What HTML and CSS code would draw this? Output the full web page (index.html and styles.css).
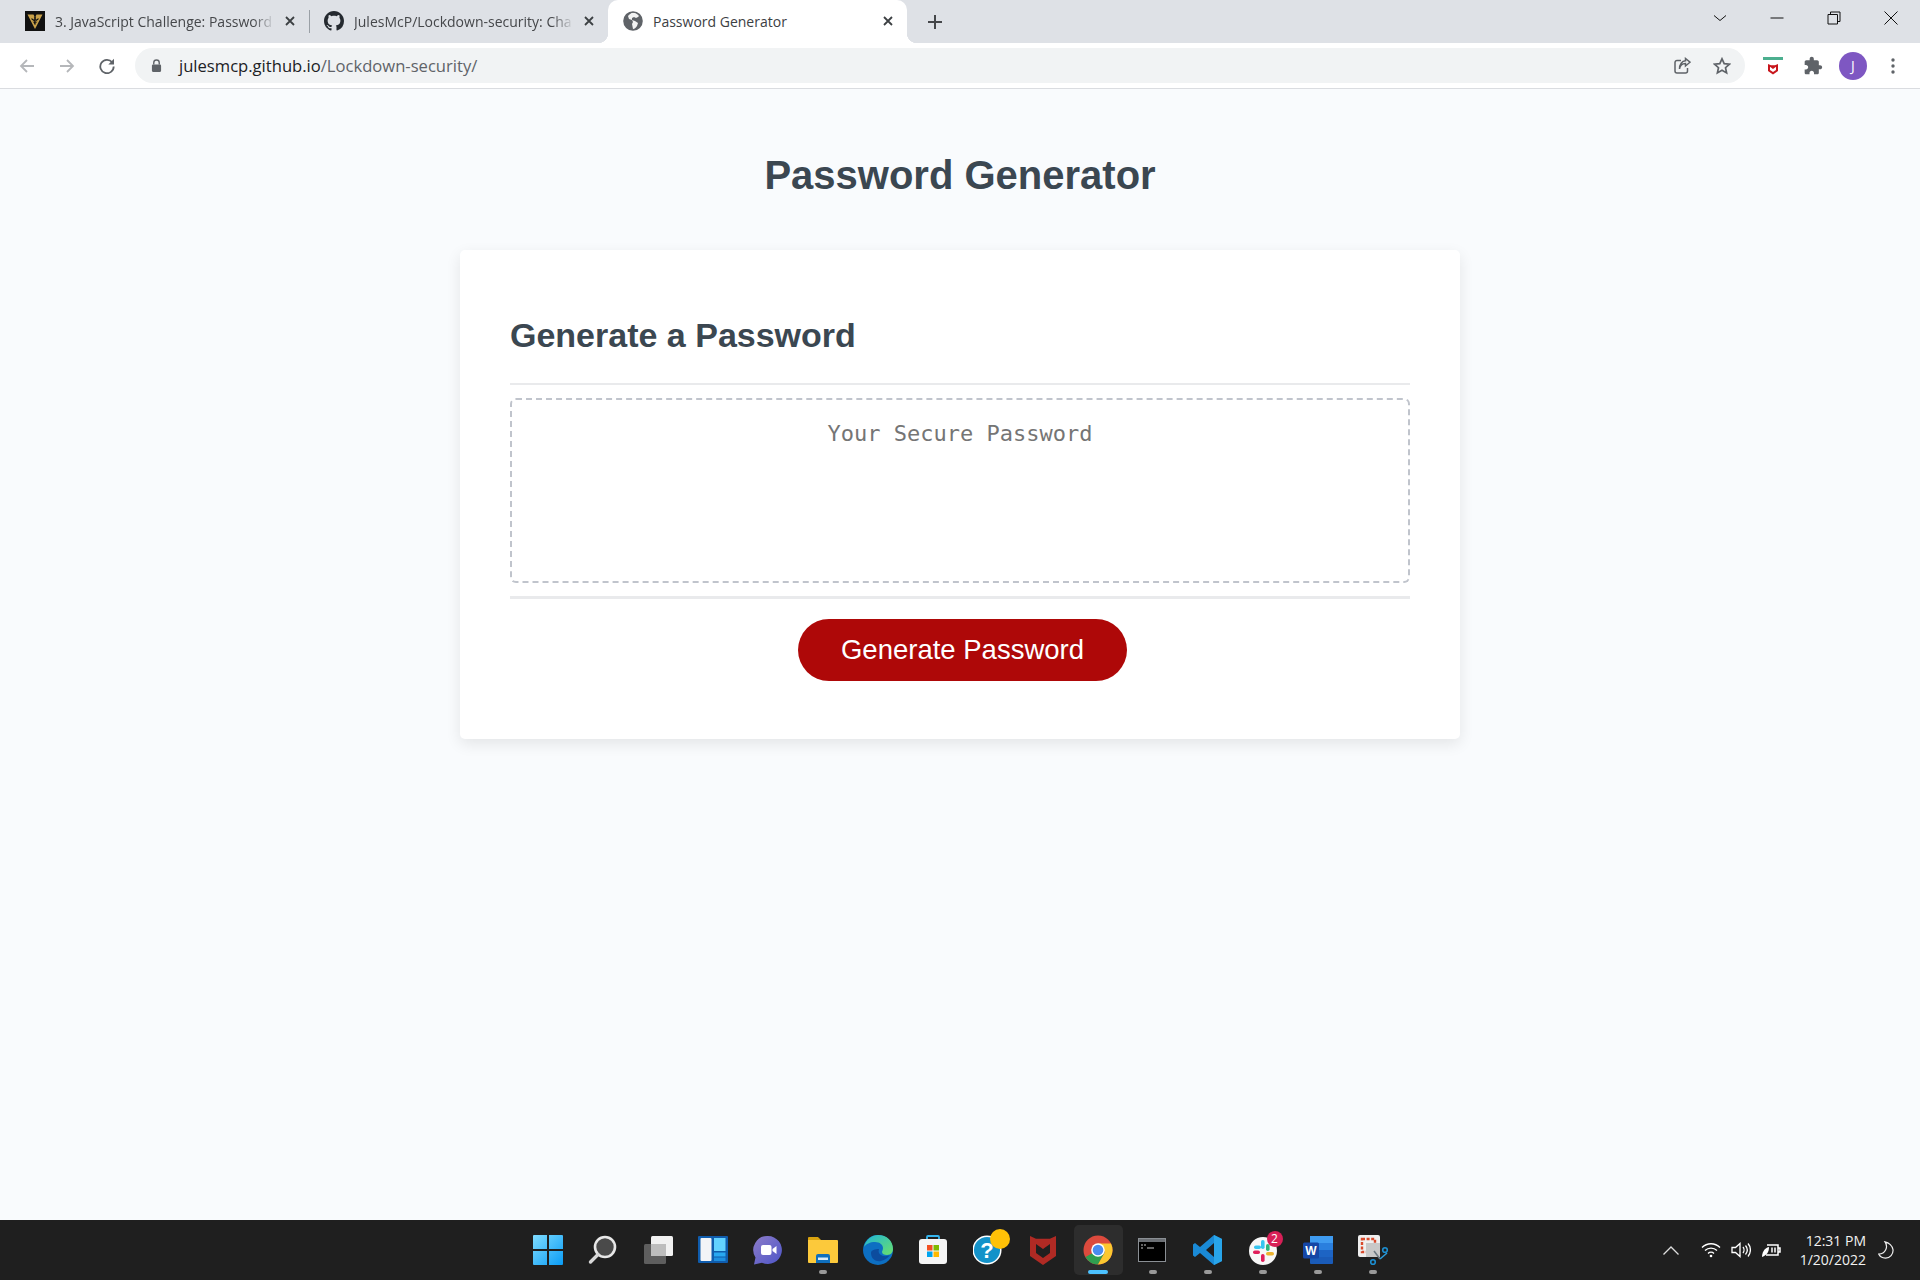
FILE: index.html
```html
<!DOCTYPE html>
<html lang="en">
<head>
<meta charset="utf-8">
<title>Password Generator</title>
<link rel="stylesheet" href="styles.css">
</head>
<body>
<div class="screen">
  <header class="browser">
    <div class="tabstrip">
      <div class="tabs">
        <div class="tab">
          <svg class="favicon" viewBox="0 0 20 20"><rect width="20" height="20" fill="#111"/><path d="M2.500 3.500h6l1.500 3 1.500-3h6L10 18z" fill="#c9a24a"/><path d="M9.200 5.500h1.600v8H9.200zM6.500 7l3 2v1.500L6.500 8.500zM13.500 7l-3 2v1.500l3-2zM7.500 10l2 1.500V13zM12.500 10l-2 1.500V13z" fill="#111"/></svg>
          <span class="tab-title">3. JavaScript Challenge: Password</span>
          <svg class="tab-close" viewBox="0 0 10 10"><path d="M1 1l8 8M9 1l-8 8"/></svg>
        </div>
        <div class="tab tab-second">
          <svg class="favicon" viewBox="0 0 16 16"><path fill="#24292f" d="M8 0C3.580 0 0 3.580 0 8c0 3.540 2.290 6.530 5.470 7.590.4.070.55-.17.55-.38 0-.19-.01-.82-.01-1.490-2.010.37-2.530-.49-2.690-.94-.09-.23-.48-.94-.82-1.130-.28-.15-.68-.52-.01-.53.63-.01 1.080.58 1.230.82.720 1.210 1.870.87 2.330.66.070-.52.280-.87.510-1.070-1.780-.2-3.640-.89-3.640-3.950 0-.87.310-1.590.820-2.150-.08-.2-.36-1.020.08-2.120 0 0 .67-.21 2.200.82.640-.18 1.320-.27 2-.27s1.360.09 2 .27c1.530-1.040 2.200-.82 2.200-.82.440 1.100.16 1.920.08 2.120.51.560.82 1.270.82 2.150 0 3.070-1.870 3.750-3.650 3.950.29.25.54.73.54 1.480 0 1.070-.01 1.930-.01 2.200 0 .21.150.46.550.38A8.013 8.013 0 0 0 16 8c0-4.420-3.580-8-8-8z"/></svg>
          <span class="tab-title">JulesMcP/Lockdown-security: Cha</span>
          <svg class="tab-close" viewBox="0 0 10 10"><path d="M1 1l8 8M9 1l-8 8"/></svg>
        </div>
        <div class="tab tab-active">
          <svg class="favicon" viewBox="0 0 20 20"><circle cx="10" cy="10" r="9" fill="#5f6368"/><path d="M10 1.500c-2 .5-4 2-5 3.500l1 3 3 1 1 2-1 2 1 5c2 0 3-2 4-3l1-3-3-2-3-1V7l2-1 2 1 2-1 1-1c-1.500-2-3.500-3.500-6-3.500z" fill="#fff" opacity=".92"/><circle cx="10" cy="10" r="9" fill="none" stroke="#5f6368" stroke-width="1.600"/></svg>
          <span class="tab-title">Password Generator</span>
          <svg class="tab-close" viewBox="0 0 10 10"><path d="M1 1l8 8M9 1l-8 8"/></svg>
        </div>
        <svg class="new-tab" viewBox="0 0 14 14"><path d="M7 0v14M0 7h14"/></svg>
      </div>
      <div class="window-controls">
        <svg class="win-btn" viewBox="0 0 14 14"><path d="M1 4.500l6 5 6-5"/></svg>
        <svg class="win-btn" viewBox="0 0 14 14"><path d="M0.500 7h13"/></svg>
        <svg class="win-btn" viewBox="0 0 14 14"><path d="M1 3.500h9.500V13H1zM3.500 3.500V1H13v9.500h-2.500"/></svg>
        <svg class="win-btn" viewBox="0 0 14 14"><path d="M.5.500l13 13M13.500.500l-13 13"/></svg>
      </div>
    </div>
    <div class="toolbar">
      <div class="nav-buttons">
        <svg class="nav-icon nav-off" viewBox="0 0 16 16"><path d="M15 8H2M8 2L2 8l6 6"/></svg>
        <svg class="nav-icon nav-off" viewBox="0 0 16 16"><path d="M1 8h13M8 2l6 6-6 6"/></svg>
        <svg class="nav-icon" viewBox="0 0 16 16"><path d="M13.200 4.300A6.700 6.700 0 1 0 14.700 8.500"/><path class="nav-head" d="M15 .8v5.700H9.300z"/></svg>
      </div>
      <div class="omnibox">
        <svg class="lock" viewBox="0 0 12 14"><path d="M3 6V4a3 3 0 0 1 6 0v2" fill="none" stroke="#5f6368" stroke-width="1.500"/><rect x="1" y="6" width="10" height="8" rx="1.200" fill="#5f6368"/></svg>
        <span class="url"><span class="url-host">julesmcp.github.io</span>/Lockdown-security/</span>
        <svg class="omni-icon" viewBox="0 0 18 18"><path d="M8 3.500H4a2 2 0 0 0-2 2V14a2 2 0 0 0 2 2h8.500a2 2 0 0 0 2-2v-3"/><path d="M6.500 12c.5-3.500 3-5.500 6-5.500V9L17 5.200 12.500 1.500v2.300C9 4 6.500 7.500 6.500 12z"/></svg>
        <svg class="omni-icon" viewBox="0 0 18 18"><path d="M9 1.800l2.200 4.800 5.200.6-3.900 3.500 1.100 5.200L9 13.300l-4.600 2.600 1.100-5.200L1.600 7.200l5.200-.6z" stroke-width="1.700"/></svg>
      </div>
      <div class="extensions">
        <div class="ext">
          <span class="ext-bar"></span>
          <svg class="ext-shield" viewBox="0 0 12 12"><path d="M1 1l3 1.200h4L11 1v7l-5 3.500L1 8z" fill="#c8161d"/><path d="M3 3.800L6 6l3-2.200V7L6 9 3 7z" fill="#fff"/></svg>
        </div>
        <div class="ext">
          <svg class="puzzle" viewBox="0 0 24 24"><path fill="#5f6368" d="M20.500 11H19V7c0-1.100-.9-2-2-2h-4V3.500C13 2.120 11.880 1 10.500 1S8 2.120 8 3.500V5H4c-1.100 0-1.990.9-1.990 2v3.800H3.500c1.490 0 2.700 1.210 2.700 2.700s-1.210 2.700-2.700 2.700H2V20c0 1.100.9 2 2 2h3.800v-1.500c0-1.490 1.210-2.700 2.700-2.700s2.700 1.210 2.700 2.700V22H17c1.100 0 2-.9 2-2v-4h1.500c1.380 0 2.500-1.120 2.500-2.500S21.880 11 20.500 11z"/></svg>
        </div>
        <div class="ext"><span class="avatar">J</span></div>
        <div class="ext">
          <svg class="dots" viewBox="0 0 4 16"><circle cx="2" cy="2" r="1.700"/><circle cx="2" cy="8" r="1.700"/><circle cx="2" cy="14" r="1.700"/></svg>
        </div>
      </div>
    </div>
  </header>

  <main class="page">
    <h1 class="page-title">Password Generator</h1>
    <section class="card">
      <h2 class="card-title">Generate a Password</h2>
      <div class="card-body">
        <div class="password-box">Your Secure Password</div>
      </div>
      <div class="card-footer">
        <button class="generate" type="button">Generate Password</button>
      </div>
    </section>
  </main>

  <footer class="taskbar">
    <div></div>
    <div class="taskbar-apps">
      <div class="app">
        <svg class="app-icon" viewBox="0 0 30 30"><defs><linearGradient id="win" x1="0" y1="0" x2="1" y2="1"><stop offset="0" stop-color="#7fdcff"/><stop offset="1" stop-color="#0a9cf5"/></linearGradient></defs><path fill="url(#win)" d="M0 1a1 1 0 0 1 1-1h13v14H0zM16 0h13a1 1 0 0 1 1 1v13H16zM0 16h14v14H1a1 1 0 0 1-1-1zM16 16h14v13a1 1 0 0 1-1 1H16z"/></svg>
      </div>
      <div class="app">
        <svg class="app-icon" viewBox="0 0 30 30"><circle cx="17" cy="12" r="10" fill="#4a4a4a" stroke="#e8e8e8" stroke-width="2.600"/><path d="M10 19.500L2.500 27" stroke="#d8d8d8" stroke-width="3.400" stroke-linecap="round"/></svg>
      </div>
      <div class="app">
        <svg class="app-icon" viewBox="0 0 30 30"><rect x="1" y="9" width="22" height="20" rx="1.500" fill="#5e5e5e"/><rect x="8" y="1" width="22" height="20" rx="1.500" fill="#f1f1f1"/><rect x="8" y="9" width="15" height="12" fill="#bdbdbd"/></svg>
      </div>
      <div class="app">
        <svg class="app-icon" viewBox="0 0 30 30"><rect y="1" width="30" height="27" rx="1" fill="#0f5cad"/><rect x="2.500" y="3" width="11" height="23" rx="1" fill="#f2f4f7"/><rect x="16" y="3" width="11.500" height="13" fill="#62d2ff"/><rect x="16" y="17.500" width="11.500" height="4" fill="#28a8f2"/><rect x="16" y="22.500" width="11.500" height="3.500" fill="#1d8fe0"/></svg>
      </div>
      <div class="app">
        <svg class="app-icon" viewBox="0 0 30 30"><defs><linearGradient id="teams" x1="0" y1="0" x2="1" y2="1"><stop offset="0" stop-color="#8d7cc9"/><stop offset="1" stop-color="#4d55c8"/></linearGradient></defs><path fill="url(#teams)" d="M15 1a14 14 0 1 1-6 26.700L1 29.500l1.500-7A14 14 0 0 1 15 1z"/><rect x="8" y="10" width="10.500" height="10" rx="2" fill="#fff"/><path d="M19.500 14l4-3v8l-4-3z" fill="#fff"/></svg>
      </div>
      <div class="app app-open">
        <svg class="app-icon" viewBox="0 0 30 30"><path d="M0 3a1 1 0 0 1 1-1h9l3 3h-13z" fill="#d9a30f"/><path d="M0 5h29a1 1 0 0 1 1 1v21a1 1 0 0 1-1 1H1a1 1 0 0 1-1-1z" fill="#fcc93b"/><path d="M8 21a2 2 0 0 1 2-2h10a2 2 0 0 1 2 2v7H8z" fill="#0f6fbd"/><rect x="10" y="22.500" width="10" height="2.500" fill="#d9ecfb"/></svg>
      </div>
      <div class="app">
        <svg class="app-icon" viewBox="0 0 30 30"><defs><linearGradient id="edge" x1="0" y1="0" x2="1" y2="1"><stop offset="0" stop-color="#1fb5d8"/><stop offset="1" stop-color="#6be06b"/></linearGradient></defs><circle cx="15" cy="15" r="15" fill="#0d6fc2"/><path d="M1 12C3 4 9 0 15 0c9 0 15 6 15 14 0 3-2 6-6 6-3 0-5-1-5-3 0-1 1-2 1-4 0-3-3-6-8-6-5 0-9 2-11 5z" fill="url(#edge)"/><path d="M8 18c0 6 5 9 10 8 4-1 7-3 9-6-2 1-6 2-9 0-2-1-3-3-2-6-4 0-8 1-8 4z" fill="#0c4c9e"/></svg>
      </div>
      <div class="app">
        <svg class="app-icon" viewBox="0 0 30 30"><path d="M9 4V2a1 1 0 0 1 1-1h10a1 1 0 0 1 1 1v2" fill="none" stroke="#35b6f0" stroke-width="1.800"/><rect x="1" y="4" width="28" height="25" rx="3" fill="#f5f5f5"/><rect x="9" y="10" width="5.500" height="5.500" fill="#f25022"/><rect x="15.500" y="10" width="5.500" height="5.500" fill="#7fba00"/><rect x="9" y="16.500" width="5.500" height="5.500" fill="#00a4ef"/><rect x="15.500" y="16.500" width="5.500" height="5.500" fill="#ffb900"/></svg>
      </div>
      <div class="app">
        <svg class="app-icon" viewBox="0 0 30 30"><circle cx="14" cy="15" r="13.800" fill="#1392c9" stroke="#fff" stroke-width="1.500"/><text class="help-mark" x="14" y="23" text-anchor="middle">?</text></svg>
        <span class="help-dot"></span>
      </div>
      <div class="app">
        <svg class="app-icon" viewBox="0 0 30 30"><path d="M2 1l6 2.800 7-.1 6.900.1L28 1v20l-13 9-13-9z" fill="#b02a24"/><path d="M8 9l7 5 7-5v9l-7 5-7-5z" fill="#1f1f1f"/></svg>
      </div>
      <div class="app app-active">
        <svg class="app-icon" viewBox="0 0 30 30"><circle cx="15" cy="15" r="14.500" fill="#dc4a3d"/><path d="M15 15L2.500 22A14.500 14.500 0 0 0 15 29.500L22 17z" fill="#2f9e4f"/><path d="M15 8.500h13A14.500 14.500 0 0 1 15 29.500L22 17z" fill="#fbc830"/><circle cx="15" cy="15" r="6.800" fill="#fff"/><circle cx="15" cy="15" r="5.300" fill="#4a8cf0"/></svg>
      </div>
      <div class="app app-open">
        <svg class="app-icon" viewBox="0 0 30 30"><rect x=".5" y="3.500" width="27" height="23" fill="#000" stroke="#8a8f94"/><rect x="1" y="4" width="26" height="3" fill="#6c7075"/><path d="M3 10h2M6 10h2M3 13h2M9 13h7" stroke="#c8c8c8"/></svg>
      </div>
      <div class="app app-open">
        <svg class="app-icon" viewBox="0 0 30 30"><path d="M21 0l8 4v22l-8 4-14-12-5 4-2-1.500V9.500L2 8l5 4L21 0zM21 8l-8 7 8 7z" fill="#1a8ad6"/><path d="M21 0l8 4v22l-8 4z" fill="#28a5ea"/></svg>
      </div>
      <div class="app app-open">
        <svg class="app-icon" viewBox="0 0 30 30"><circle cx="15" cy="16" r="14" fill="#f7f7f7"/><rect x="13" y="5" width="3.600" height="9" rx="1.800" fill="#36c5f0"/><rect x="6" y="10.500" width="7" height="3.600" rx="1.800" fill="#36c5f0"/><rect x="18" y="9" width="3.600" height="7" rx="1.800" fill="#2eb67d"/><rect x="18" y="17" width="8" height="3.600" rx="1.800" fill="#ecb22e"/><rect x="13" y="19" width="3.600" height="8" rx="1.800" fill="#e01e5a"/><rect x="5" y="15.500" width="7" height="3.600" rx="1.800" fill="#e01e5a"/></svg>
        <span class="slack-badge">2</span>
      </div>
      <div class="app app-open">
        <svg class="app-icon" viewBox="0 0 30 30"><rect x="7" y="1" width="23" height="28" rx="1" fill="#1a5bb8"/><rect x="7" y="1" width="23" height="7" fill="#3f9bf0"/><rect x="7" y="8" width="23" height="7" fill="#2a7fde"/><rect x="7" y="15" width="23" height="7" fill="#1d64c4"/><rect y="7.500" width="16" height="16" rx="1.500" fill="#1546a6"/><text class="word-mark" x="8" y="20" text-anchor="middle">W</text></svg>
      </div>
      <div class="app app-open">
        <svg class="app-icon app-icon-snip" viewBox="0 0 30 30"><rect width="22" height="22" rx="2" fill="#efefef"/><rect x="4" y="4" width="13" height="13" fill="none" stroke="#d94a2c" stroke-width="2.400" stroke-dasharray="3 1.600"/><rect x="8" y="8" width="14" height="14" fill="#c8c8c8"/><path d="M16 16l6 8" stroke="#6c7880" stroke-width="1.600"/><path d="M22 24L29 18" stroke="#2a9ad8" stroke-width="1.600"/><circle cx="15" cy="27" r="2.300" fill="none" stroke="#1d8ed0" stroke-width="1.600"/><circle cx="27" cy="15" r="2.300" fill="none" stroke="#1d8ed0" stroke-width="1.600"/></svg>
      </div>
    </div>
    <div class="tray">
      <svg class="tray-chevron" viewBox="0 0 16 9"><path d="M.5 8.500L8 1l7.500 7.500"/></svg>
      <div class="tray-icons">
        <svg class="tray-icon" viewBox="0 0 20 16"><path d="M1 5.500c5-5 13-5 18 0M4 8.500c3.300-3.300 8.700-3.300 12 0M7 11.500c1.700-1.700 4.300-1.700 6 0"/><circle cx="10" cy="14" r="1.300" fill="#fff" stroke="none"/></svg>
        <svg class="tray-icon" viewBox="0 0 20 16"><path d="M1 5.500h3.500L9 1.500v13l-4.500-4H1zM12 5c1.300 1.600 1.300 4.400 0 6M14.500 3.500c2.200 2.700 2.200 6.300 0 9M17 1.500c3.200 3.600 3.200 9.400 0 13"/></svg>
        <svg class="tray-icon" viewBox="0 0 20 16"><path d="M6 3h11v10H5M17 6h2v4h-2M11 5.500v5M14 5.500v5" stroke-width="1.500"/><path d="M1 15c0-4 2-9 7-10 0 5-2 8-7 10z" fill="#fff" stroke="none"/></svg>
      </div>
      <div class="clock"><span>12:31 PM</span><span>1/20/2022</span></div>
      <svg class="moon" viewBox="0 0 16 18"><path d="M7 .8c4 .8 7.500 4 8 7.800.5 4.500-3 8.500-7.500 8.500-3 0-5.700-1.500-6.800-4C7.500 13 10.500 6 7 .8z"/></svg>
    </div>
  </footer>
</div>
</body>
</html>
```
FILE: styles.css
```css
* { box-sizing: border-box; }
html, body { margin: 0; padding: 0; height: 1280px; overflow: hidden; }
body { font-family: "Liberation Sans", Arial, sans-serif; background: #f9fbfd; }

.screen { width: 1920px; height: 1280px; display: flex; flex-direction: column; overflow: hidden; }

/* browser chrome */
.browser { flex: none; }
.tabstrip { height: 43px; background: #dee1e6; display: flex; justify-content: space-between; }
.tabs { display: flex; align-items: center; padding-left: 10px; }
.tab { position: relative; width: 299px; height: 43px; display: flex; align-items: center; padding: 0 14px 1px 15px; font: 14px "Open Sans", sans-serif; color: #45474a; }
.tab-second::before { content: ""; position: absolute; left: 0; top: 10px; width: 1px; height: 23px; background: #9aa0a6; }
.tab-active { background: #fff; color: #3c4043; border-radius: 10px 10px 0 0; }
.tab-active::before, .tab-active::after { content: ""; position: absolute; bottom: 0; width: 10px; height: 10px; }
.tab-active::before { left: -10px; background: radial-gradient(circle at 0 0, transparent 10px, #fff 10.5px); }
.tab-active::after { right: -10px; background: radial-gradient(circle at 100% 0, transparent 10px, #fff 10.5px); }
.favicon { flex: none; width: 20px; height: 20px; margin-right: 10px; }
.tab-title { flex: 1; min-width: 0; white-space: nowrap; -webkit-mask-image: linear-gradient(90deg, #000 90%, transparent); mask-image: linear-gradient(90deg, #000 90%, transparent); }
.tab-active .tab-title { -webkit-mask-image: none; mask-image: none; }
.tab-close { flex: none; width: 10px; height: 10px; margin-left: 10px; fill: none; stroke: #3c4043; stroke-width: 1.800; }
.new-tab { width: 14px; height: 14px; margin-left: 21px; fill: none; stroke: #45474a; stroke-width: 2; }
.window-controls { display: flex; padding: 11px 22px 0 0; gap: 43px; }
.win-btn { width: 14px; height: 14px; fill: none; stroke: #111; stroke-width: 1; }

.toolbar { height: 46px; background: #fff; border-bottom: 1px solid #dadce0; display: flex; align-items: center; padding: 0 7px 0 19px; }
.nav-buttons { display: flex; flex: none; gap: 24px; margin-right: 20px; }
.nav-icon { width: 16px; height: 16px; fill: none; stroke: #5f6368; stroke-width: 1.800; }
.nav-head { fill: #5f6368; stroke: none; }
.nav-off { stroke: #b5b7ba; }
.omnibox { flex: 1; height: 35px; background: #f1f3f4; border-radius: 18px; display: flex; align-items: center; padding: 0 14px 0 16px; }
.lock { width: 11px; height: 13px; margin-right: 17px; }
.url { flex: 1; font: 16.600px "Open Sans", sans-serif; color: #5f6368; }
.url-host { color: #202124; }
.omni-icon { width: 18px; height: 18px; margin-left: 22px; fill: none; stroke: #5f6368; stroke-width: 1.500; }
.extensions { display: flex; flex: none; align-items: center; margin-left: 8px; }
.ext { width: 40px; height: 40px; display: flex; flex-direction: column; align-items: center; justify-content: center; }
.ext-bar { width: 20px; height: 3px; background: #4caf8f; margin-bottom: 3px; }
.ext-shield { width: 12px; height: 12px; }
.puzzle { width: 20px; height: 20px; }
.avatar { width: 28px; height: 28px; border-radius: 50%; background: #7e57c2; color: #fff; font: 14px/28px "Open Sans", sans-serif; text-align: center; }
.dots { width: 4px; height: 16px; fill: #5f6368; }

/* page */
.page { flex: 1; min-height: 0; background: #f9fbfd; }
.page-title { margin: 0; padding-top: 63px; height: 161px; text-align: center; font-size: 40px; line-height: 46px; font-weight: 700; color: #3b4751; }
.card { width: 1000px; height: 489px; margin: 0 auto; background: #fff; border-radius: 5px; box-shadow: 0 5px 15px rgba(0, 0, 0, .09); padding: 65px 50px 0; }
.card-title { margin: 0; font-size: 34px; line-height: 40px; font-weight: 700; color: #3b4751; padding-bottom: 28px; border-bottom: 2px solid #e9eaec; }
.card-body { padding: 13px 0; border-bottom: 3px solid #e9eaec; }
.password-box { height: 185px; border: 2px dashed #c0c4cc; border-radius: 6px; padding: 20px; text-align: center; font: 22px/27px "DejaVu Sans Mono", monospace; color: #757575; }
.card-footer { display: flex; justify-content: center; padding-top: 20px; }
.generate { width: 329px; height: 62px; border: 0; border-radius: 35px; background: #ae0808; color: #fff; font: 27.500px "Liberation Sans", Arial, sans-serif; padding: 0; margin-left: 5px; }

/* taskbar */
.taskbar { flex: none; height: 60px; background: #1f1f1f; display: grid; grid-template-columns: 1fr auto 1fr; align-items: center; }
.taskbar-apps { display: flex; margin-left: 1px; }
.app { position: relative; width: 55px; height: 50px; display: flex; align-items: center; justify-content: center; }
.app-icon { width: 30px; height: 30px; }
.app-icon-snip { overflow: visible; }
.app-open::after, .app-active::after { content: ""; position: absolute; bottom: 1px; left: 50%; transform: translateX(-50%); height: 4px; border-radius: 2px; }
.app-open::after { width: 8px; background: #9a9a9a; }
.app-active { background: #2d2d2d; border-radius: 5px; width: 49px; margin: 0 3px; }
.app-active::after { width: 20px; background: #4cc2ff; }
.help-dot { position: absolute; top: 4px; left: 29px; width: 20px; height: 20px; border-radius: 50%; background: #ffc107; }
.help-mark { font: 700 22px "Liberation Sans", Arial, sans-serif; fill: #fff; }
.word-mark { font: 700 12px "Liberation Sans", Arial, sans-serif; fill: #fff; }
.slack-badge { position: absolute; top: 6px; left: 31px; width: 16px; height: 16px; border-radius: 50%; background: #d81f57; color: #fff; font: 12px/16px "Open Sans", sans-serif; text-align: center; }
.tray { display: flex; align-items: center; justify-content: flex-end; color: #fff; padding-right: 26px; }
.tray-chevron { width: 16px; height: 9px; fill: none; stroke: #ddd; stroke-width: 1.300; margin-right: 22px; }
.tray-icons { display: flex; gap: 10px; margin-right: 19px; }
.tray-icon { width: 20px; height: 16px; fill: none; stroke: #fff; stroke-width: 1.300; }
.clock { display: flex; flex-direction: column; align-items: flex-end; font: 14px/19px "Open Sans", sans-serif; color: #f2f2f2; margin-right: 12px; }
.moon { width: 16px; height: 18px; fill: none; stroke: #eee; stroke-width: 1.200; }
```
